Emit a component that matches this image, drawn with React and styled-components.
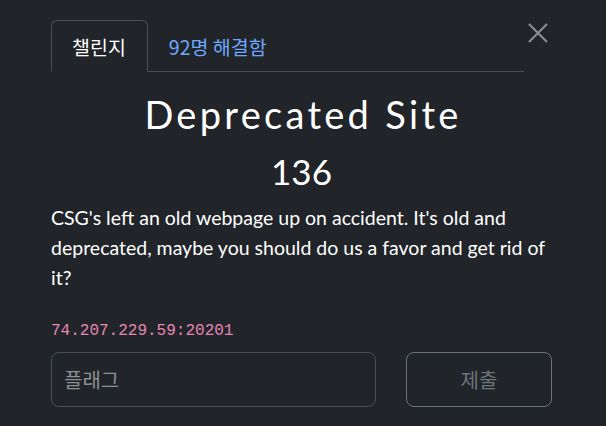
import React from 'react';
import styled, { createGlobalStyle } from 'styled-components';

const GlobalStyle = createGlobalStyle`
  html, body {
    margin: 0;
    padding: 0;
    background: #212529;
  }
  body {
    font-family: Lato, "Noto Sans CJK KR", sans-serif;
    color: #dee2e6;
  }
`;

const Body = styled.div`
  width: 606px;
  height: 426px;
  box-sizing: border-box;
  padding: 20px 54px 0 51px;
  overflow: hidden;
`;

const Header = styled.div`
  display: flex;
  align-items: flex-start;
`;

const Tabs = styled.ul`
  flex: 1;
  display: flex;
  margin: 0;
  padding: 0;
  list-style: none;
  border-bottom: 1px solid #495057;
`;

const Tab = styled.li`
  height: 50px;
  margin-bottom: -1px;
  box-sizing: content-box;
  display: flex;
  align-items: center;
  padding: 0 21px 0 20px;
  font-family: "Noto Sans CJK KR", sans-serif;
  font-size: 19.5px;
  border: 1px solid ${p => (p.$active ? '#495057' : 'transparent')};
  border-bottom-color: ${p => (p.$active ? '#212529' : 'transparent')};
  border-radius: 6px 6px 0 0;
  color: ${p => (p.$active ? '#ffffff' : '#6ea8fe')};
`;

const Close = styled.button`
  width: 28px;
  height: 28px;
  margin: -1px 0 0 0;
  padding: 0;
  border: 0;
  background: transparent;
  display: flex;
  align-items: center;
  justify-content: center;
`;

const Title = styled.h2`
  margin: 20px 0 0;
  padding-left: 3px;
  font-weight: 400;
  font-size: 38px;
  line-height: 1.2;
  letter-spacing: 3.3px;
  text-align: center;
  color: #ffffff;
`;

const Value = styled.h3`
  margin: 12px 0 0;
  font-weight: 400;
  font-size: 35px;
  line-height: 1.2;
  text-align: center;
  color: #ffffff;
`;

const Description = styled.p`
  margin: 11px 0 0;
  font-size: 19.5px;
  line-height: 30px;
  color: #ffffff;
`;

const Code = styled.code`
  display: block;
  margin-top: 26px;
  font-family: "Liberation Mono", monospace;
  font-size: 16px;
  line-height: 24px;
  color: #e685b5;
`;

const FormRow = styled.form`
  display: grid;
  grid-template-columns: 1fr 146px;
  gap: 30px;
  margin-top: 9px;
`;

const Input = styled.input`
  height: 55px;
  box-sizing: border-box;
  padding: 0 12px;
  background: transparent;
  border: 1px solid #495057;
  border-radius: 8px;
  font-family: "Noto Sans CJK KR", sans-serif;
  font-size: 20px;
  color: #dee2e6;
  outline: none;
  &::placeholder {
    color: #8b9095;
  }
`;

const Submit = styled.button`
  height: 55px;
  box-sizing: border-box;
  background: transparent;
  border: 1px solid #6c757d;
  border-radius: 8px;
  font-family: "Noto Sans CJK KR", sans-serif;
  font-size: 20px;
  color: #6c757d;
`;

const CloseIcon = () => (
  <svg width="22" height="22" viewBox="0 0 22 22">
    <path d="M2 2 L20 20 M20 2 L2 20" stroke="#8a8c8f" strokeWidth="2.2" fill="none" />
  </svg>
);

export default function App() {
  return (
    <>
      <GlobalStyle />
      <Body>
        <Header>
          <Tabs>
            <Tab $active>챌린지</Tab>
            <Tab>92명 해결함</Tab>
          </Tabs>
          <Close aria-label="Close">
            <CloseIcon />
          </Close>
        </Header>
        <Title>Deprecated Site</Title>
        <Value>136</Value>
        <Description>
          CSG's left an old webpage up on accident. It's old and deprecated, maybe you should do us a favor and get rid of it?
        </Description>
        <Code>74.207.229.59:20201</Code>
        <FormRow onSubmit={e => e.preventDefault()}>
          <Input placeholder="플래그" />
          <Submit type="submit">제출</Submit>
        </FormRow>
      </Body>
    </>
  );
}
